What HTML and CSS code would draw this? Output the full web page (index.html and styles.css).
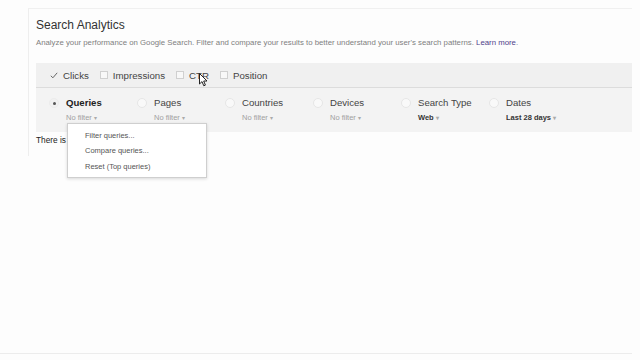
FILE: index.html
```html
<!DOCTYPE html>
<html lang="en">
  <head>
    <meta charset="UTF-8" />
    <title>Search Analytics</title>
    <link rel="stylesheet" href="styles.css">
  </head>
  <body>
    <div class="content">
      <h1 class="title">Search Analytics</h1>
      <p class="desc">
        Analyze your performance on Google Search. Filter and compare your results to better understand your user's search patterns.
        <a href="#">Learn more</a>.
      </p>

      <div class="panel">
        <div class="metrics">
          <label class="metric">
            <svg class="check" width="8" height="7" viewBox="0 0 8 7"><path d="M0.8 3.8 L2.9 5.8 L7.2 0.8" fill="none" stroke="#666" stroke-width="1"/></svg>
            Clicks
          </label>
          <label class="metric"><span class="box"></span>Impressions</label>
          <label class="metric"><span class="box"></span>CTR</label>
          <label class="metric"><span class="box"></span>Position</label>

          <svg class="cursor" width="10" height="14" viewBox="0 0 10 14">
            <path d="M0.5 0.5 L0.5 11 L3 8.6 L4.8 12.8 L6.4 12.1 L4.7 8 L8 8 Z" fill="#fff" stroke="#222" stroke-width="1" stroke-linejoin="round"/>
          </svg>
        </div>

        <div class="dims">
          <div class="dim">
            <span class="radio on"></span>
            <div>
              <div class="dim-label bold">Queries</div>
              <div class="dim-sub">No filter <span class="caret">&#9662;</span></div>
            </div>
            <ul class="menu">
              <li>Filter queries...</li>
              <li>Compare queries...</li>
              <li>Reset (Top queries)</li>
            </ul>
          </div>
          <div class="dim">
            <span class="radio"></span>
            <div>
              <div class="dim-label">Pages</div>
              <div class="dim-sub">No filter <span class="caret">&#9662;</span></div>
            </div>
          </div>
          <div class="dim">
            <span class="radio"></span>
            <div>
              <div class="dim-label">Countries</div>
              <div class="dim-sub">No filter <span class="caret">&#9662;</span></div>
            </div>
          </div>
          <div class="dim">
            <span class="radio"></span>
            <div>
              <div class="dim-label">Devices</div>
              <div class="dim-sub">No filter <span class="caret">&#9662;</span></div>
            </div>
          </div>
          <div class="dim">
            <span class="radio"></span>
            <div>
              <div class="dim-label">Search Type</div>
              <div class="dim-sub dark">Web <span class="caret">&#9662;</span></div>
            </div>
          </div>
          <div class="dim">
            <span class="radio"></span>
            <div>
              <div class="dim-label">Dates</div>
              <div class="dim-sub dark">Last 28 days <span class="caret">&#9662;</span></div>
            </div>
          </div>
        </div>
      </div>

      <p class="note">There is</p>
    </div>
    <div class="footer-line"></div>
  </body>
</html>
```

FILE: styles.css
```css
body {
  margin: 0;
  height: 360px;
  display: flex;
  flex-direction: column;
  background-color: #fdfdfd;
  font-family: "Liberation Sans", Arial, sans-serif;
  color: #333;
  overflow: hidden;
}

.content {
  margin: 8px 8px 0 28px;
  height: 147px;
  padding-left: 7px;
  border-top: 1px solid #f0f0f0;
  border-left: 1px solid #eeeeee;
}

.title {
  margin: 9px 0 0;
  font-size: 12px;
  line-height: 14px;
  font-weight: normal;
  color: #333;
}

.desc {
  margin: 6px 0 0;
  font-size: 7.8px;
  line-height: 10px;
  color: #808080;
}

.desc a {
  color: #4e3f8a;
  text-decoration: none;
}

.panel {
  margin-top: 15px;
}

.metrics {
  position: relative;
  height: 24px;
  display: flex;
  align-items: center;
  gap: 11px;
  padding-left: 14px;
  background-color: #f0f0f0;
  border-bottom: 1px solid #dcdcdc;
  font-size: 9.7px;
  color: #444;
}

.metric {
  display: flex;
  align-items: center;
}

.check {
  margin-right: 5px;
}

.box {
  width: 6px;
  height: 6px;
  margin-right: 5px;
  border: 1px solid #d0d0d0;
  background-color: #f8f8f8;
}

.cursor {
  position: absolute;
  left: 163px;
  top: 10px;
}

.dims {
  height: 44px;
  display: flex;
  padding-left: 13px;
  background-color: #f3f3f3;
}

.dim {
  position: relative;
  width: 88px;
  display: flex;
  align-items: flex-start;
  padding-top: 9px;
  box-sizing: border-box;
}

.radio {
  width: 8px;
  height: 8px;
  margin: 1px 7px 0 0;
  border-radius: 50%;
  border: 1px solid #e6e6e6;
  background-color: #f9f9f9;
  flex-shrink: 0;
  position: relative;
}

.radio.on {
  border-color: #ececec;
  background-color: #f1f1f1;
}

.radio.on::after {
  content: "";
  position: absolute;
  left: 2.5px;
  top: 2.5px;
  width: 3px;
  height: 3px;
  border-radius: 50%;
  background-color: #555;
}

.dim-label {
  font-size: 9.6px;
  line-height: 12px;
  color: #444;
  white-space: nowrap;
}

.dim-label.bold {
  font-weight: bold;
  color: #222;
}

.dim-sub {
  margin-top: 4px;
  font-size: 7.5px;
  line-height: 10px;
  color: #a0a0a0;
  white-space: nowrap;
}

.dim-sub.dark {
  font-weight: bold;
  color: #333;
}

.caret {
  font-size: 6px;
  color: #aaa;
}

.menu {
  position: absolute;
  left: 18px;
  top: 35px;
  width: 138px;
  margin: 0;
  padding: 4px 0 0;
  list-style: none;
  height: 49px;
  background-color: #fff;
  border: 1px solid #cfcfcf;
  box-shadow: 0 1px 3px rgba(0, 0, 0, 0.15);
  z-index: 2;
}

.menu li {
  padding-left: 17px;
  font-size: 7.5px;
  line-height: 15.3px;
  color: #555;
}

.note {
  margin: 3px 0 0;
  font-size: 8.3px;
  line-height: 10px;
  color: #222;
}

.footer-line {
  margin-top: auto;
  margin-bottom: 6px;
  width: 632px;
  border-top: 1px solid #ececec;
}
```
